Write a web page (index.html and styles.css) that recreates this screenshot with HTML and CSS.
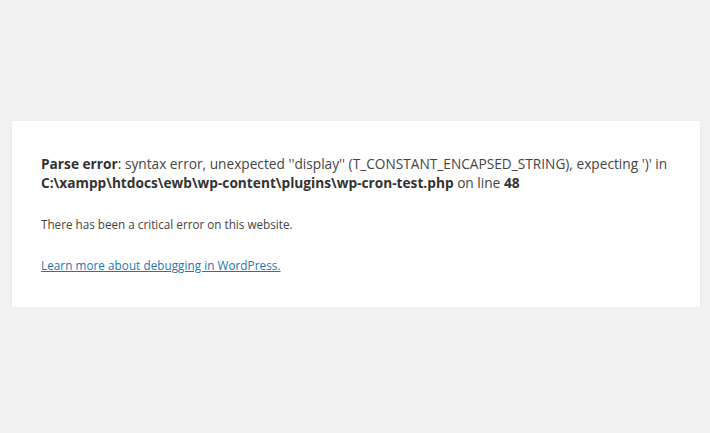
FILE: index.html
```html
<!DOCTYPE html>
<html lang="en">
<head>
<meta charset="utf-8">
<title>WordPress &rsaquo; Error</title>
<link rel="stylesheet" href="styles.css">
</head>
<body>
<main class="error-page">
  <div class="php-error"><b>Parse error</b>: syntax error, unexpected ''display'' (T_CONSTANT_ENCAPSED_STRING), expecting ')' in <b>C:\xampp\htdocs\ewb\wp-content\plugins\wp-cron-test.php</b> on line <b>48</b></div>
  <p class="note">There has been a critical error on this website.</p>
  <p class="note"><a href="#">Learn more about debugging in WordPress.</a></p>
</main>
</body>
</html>
```
FILE: styles.css
```css
html, body {
  margin: 0;
  padding: 0;
}
body {
  background: #f1f1f1;
  font-family: "Open Sans", "Noto Sans", sans-serif;
  color: #444;
  padding: 121px 10px 0 12px;
}
.error-page {
  background: #fff;
  width: 688px;
  box-sizing: border-box;
  padding: 34px 29px 14px 29px;
  box-shadow: 0 1px 2px rgba(0,0,0,.07);
}
.php-error {
  font-size: 13.7px;
  line-height: 18.5px;
}
.php-error b {
  font-weight: 700;
  color: #333;
}
.note {
  margin: 22.5px 0 18px;
  font-size: 11.7px;
  line-height: 19px;
}
.note a {
  color: #1a76b4;
  letter-spacing: 0.06px;
}
```
